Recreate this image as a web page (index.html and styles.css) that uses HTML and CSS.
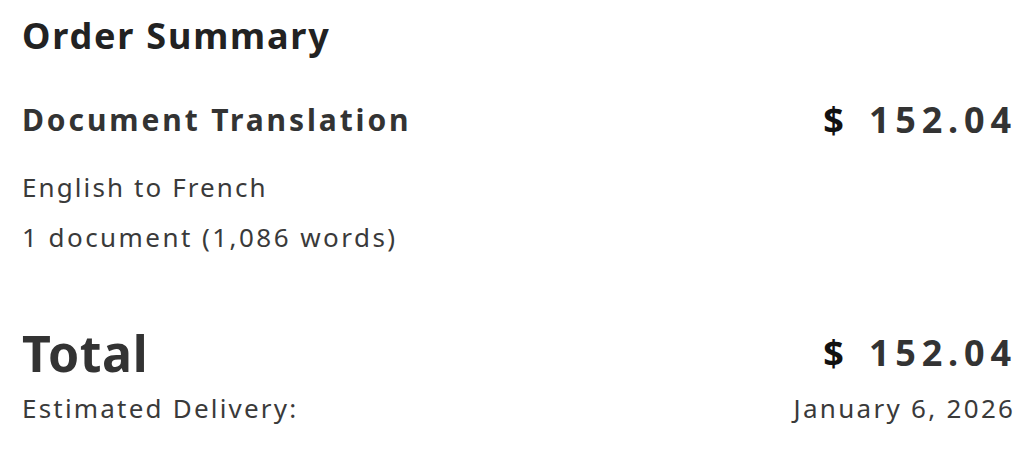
FILE: index.html
```html
<!DOCTYPE html>
<html lang="en">
<head>
<meta charset="utf-8">
<title>Order Summary</title>
<link rel="stylesheet" href="styles.css">
</head>
<body>
<main class="summary">
  <h1 class="summary-title">Order Summary</h1>
  <section class="item">
    <div class="item-row">
      <h2 class="item-name">Document Translation</h2>
      <div class="price"><span class="currency">$</span><span class="amount">152.04</span></div>
    </div>
    <div class="item-details">
      <p class="detail detail-lang">English to French</p>
      <p class="detail detail-count">1 document (1,086 words)</p>
    </div>
  </section>
  <section class="total">
    <div class="total-row">
      <h2 class="total-label">Total</h2>
      <div class="price"><span class="currency">$</span><span class="amount">152.04</span></div>
    </div>
    <div class="delivery-row">
      <span class="delivery-label">Estimated Delivery:</span>
      <span class="delivery-date">January 6, 2026</span>
    </div>
  </section>
</main>
</body>
</html>
```

FILE: styles.css
```css
html, body {
  margin: 0;
  padding: 0;
  background: #ffffff;
}

body {
  font-family: "Noto Sans", "Open Sans", sans-serif;
  color: #333333;
}

.summary {
  padding: 12px 11px 0 22px;
}

.summary-title {
  margin: 0;
  font-size: 36px;
  line-height: 48px;
  font-weight: 700;
  letter-spacing: 1.8px;
  color: #222222;
}

.item-row,
.total-row,
.delivery-row {
  display: flex;
  justify-content: space-between;
  align-items: center;
}

.item-row {
  margin-top: 36px;
  height: 48px;
}

.item-name {
  margin: 0;
  font-size: 30px;
  line-height: 48px;
  font-weight: 700;
  letter-spacing: 2.9px;
  color: #333333;
}

.price {
  display: flex;
  align-items: baseline;
  gap: 25px;
  font-size: 36px;
  line-height: 48px;
  font-weight: 700;
  color: #333333;
}

.currency {
  color: #111111;
}

.amount {
  letter-spacing: 5.8px;
  margin-right: -3.8px;
}

.item-details {
  margin-top: 18px;
}

.detail {
  margin: 0;
  font-size: 26px;
  line-height: 50px;
  color: #3a3a3a;
}

.detail-lang {
  letter-spacing: 2.1px;
}

.detail-count {
  letter-spacing: 2.45px;
}

.total-row {
  margin-top: 61px;
  height: 60px;
}

.total-label {
  margin: 0;
  font-size: 50px;
  line-height: 60px;
  font-weight: 700;
  letter-spacing: 0.6px;
  color: #333333;
}

.delivery-row {
  height: 50px;
  font-size: 26px;
  line-height: 50px;
  color: #3a3a3a;
}

.delivery-label {
  letter-spacing: 2.2px;
}

.delivery-date {
  letter-spacing: 2.3px;
  margin-right: -2.3px;
}
```
